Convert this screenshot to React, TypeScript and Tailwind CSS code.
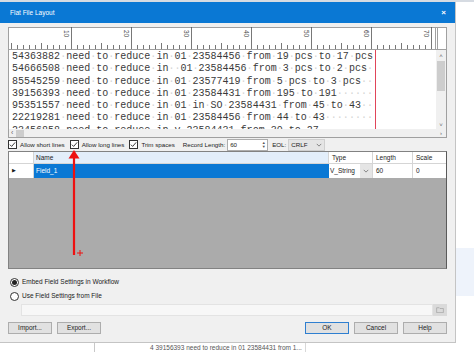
import React from 'react';

const lines = [
  '54363882 need to reduce in 01 23584456 from 19 pcs to 17 pcs',
  '54666508 need to reduce in  01 23584456 from 3 pcs to 2 pcs',
  '85545259 need to reduce in 01 23577419 from 5 pcs to 3 pcs',
  '39156393 need to reduce in 01 23584431 from 195 to 191',
  '95351557 need to reduce in 01 in SO 23584431 from 45 to 43',
  '22219281 need to reduce in 01 23584456 from 44 to 43',
  '23456858 need to reduce in v 23584431 from 30 to 27',
];

const MonoLine = ({ text }: { text: string }) => (
  <div className="h-[12.3px] whitespace-pre">
    {text
      .padEnd(60, ' ')
      .split('')
      .map((c, i) =>
        c === ' ' ? (
          <span key={i} className="text-[#d4d4d4]">·</span>
        ) : (
          <span key={i}>{c}</span>
        )
      )}
  </div>
);

const Ruler = () => {
  const ticks = Array.from({ length: 71 }, (_, i) => i);
  return (
    <svg width="439" height="23" className="block">
      <rect x="0.5" y="0.5" width="438" height="22" fill="#fff" stroke="#a0a0a0" />
      <line x1="427.5" y1="0" x2="427.5" y2="23" stroke="#a0a0a0" />
      <line x1="429.5" y1="0" x2="429.5" y2="23" stroke="#a0a0a0" />
      {ticks.map((i) => {
        const x = 3 + i * 6 + 0.5;
        if (x > 427) return null;
        const major = i % 10 === 0 && i > 0;
        const mid = i % 5 === 0;
        return (
          <line
            key={i}
            x1={x}
            x2={x}
            y1={major ? 0 : mid ? 16 : 18}
            y2={22}
            stroke="#555"
            strokeWidth="0.8"
          />
        );
      })}
      {[10, 20, 30, 40, 50, 60, 70].map((n, k) => (
        <text
          key={n}
          x="0"
          y="0"
          fontSize="6.5"
          fill="#444"
          fontFamily="Liberation Sans"
          transform={`translate(${3 + (k + 1) * 60 - 7} 3) rotate(90)`}
        >
          {n}
        </text>
      ))}
    </svg>
  );
};

const Check = () => (
  <span className="flex h-[9px] w-[9px] items-center justify-center border border-[#333] bg-white">
    <svg viewBox="0 0 8 8" className="h-[7px] w-[7px]">
      <path d="M1 4.2 L3 6.2 L7 1.6" stroke="#222" fill="none" strokeWidth="1" />
    </svg>
  </span>
);

const Radio = ({ on }: { on?: boolean }) => (
  <span className="flex h-[9px] w-[9px] items-center justify-center rounded-full border border-[#333] bg-white">
    {on && <span className="h-[5px] w-[5px] rounded-full bg-[#222]" />}
  </span>
);

const Chevron = () => (
  <svg viewBox="0 0 8 5" className="h-[4px] w-[6px]">
    <path d="M1 1 L4 4 L7 1" stroke="#555" fill="none" strokeWidth="0.9" />
  </svg>
);

const Btn = ({ label, primary }: { label: string; primary?: boolean }) => (
  <div
    className={`flex h-[12px] w-[44px] items-center justify-center bg-[#e1e1e1] text-[6.5px] text-[#222] ${
      primary ? 'border-[1.5px] border-[#2f7fd0]' : 'border border-[#adadad]'
    }`}
  >
    {label}
  </div>
);

export default function App() {
  return (
    <div className="relative h-[352px] w-[474px] overflow-hidden bg-white font-['Liberation_Sans',sans-serif] text-[#1a1a1a]">
      <div className="h-[2px] bg-[#d6dbe2]" />
      <div className="flex">
        <div className="flex h-[341px] w-[456px] flex-col border-r border-b border-[#c4c4c4] bg-[#f0f0f0]">
          {/* title bar */}
          <div className="flex h-[21px] items-center justify-between bg-[#0a78d4] pl-[10px] pr-[9px] text-white">
            <span className="text-[6.5px]">Flat File Layout</span>
            <span className="text-[8px] font-bold">×</span>
          </div>

          <div className="flex flex-col pl-[8px] pr-[8px] pt-[4px]">
            <Ruler />
            {/* text area */}
            <div className="flex h-[88px] border-x border-b border-[#a0a0a0] bg-white">
              <div className="flex w-[428px] flex-col">
                <div className="relative h-[79px] overflow-hidden pl-[3px] pt-[1px] font-['Liberation_Mono',monospace] text-[10px] leading-[12.3px] text-[#3a3a3a]">
                  {lines.map((l, i) => (
                    <MonoLine key={i} text={l} />
                  ))}
                  <div className="absolute left-[366px] top-0 h-full w-px bg-[#e0455a]" />
                </div>
                <div className="flex h-[8px] items-center bg-[#f0f0f0] pl-[2px] text-[7px] leading-[8px] text-[#666]">
                  <span>‹</span>
                  <span className="ml-[3px] h-[7px] w-[8px] bg-[#cdcdcd]" />
                </div>
              </div>
              <div className="flex w-[10px] flex-col items-center bg-[#f0f0f0] text-[6px] text-[#666]">
                <span className="mt-[2px] leading-[8px]">˄</span>
                <span className="mt-[1px] h-[30px] w-[8px] bg-[#cdcdcd]" />
                <span className="mt-auto leading-[8px]">˅</span>
                <span className="leading-[8px]">›</span>
              </div>
            </div>

            {/* options row */}
            <div className="flex h-[13px] items-center text-[6.2px] text-[#222]">
              <Check />
              <span className="ml-[3px]">Allow short lines</span>
              <span className="ml-[5px]" />
              <Check />
              <span className="ml-[3px]">Allow long lines</span>
              <span className="ml-[5px]" />
              <Check />
              <span className="ml-[3px]">Trim spaces</span>
              <span className="ml-[8px]">Record Length:</span>
              <div className="ml-[2px] flex h-[12px] w-[41px] items-center border border-[#adadad] bg-white">
                <span className="flex-1 pl-[2px]">60</span>
                <span className="flex w-[7px] flex-col items-center text-[4px] leading-[4px] text-[#555]">
                  <span>▲</span>
                  <span>▼</span>
                </span>
              </div>
              <span className="ml-[4px]">EOL:</span>
              <div className="ml-[2px] flex h-[12px] w-[37px] items-center justify-between border border-[#cfcfcf] bg-[#e5e5e5] px-[2px]">
                <span>CRLF</span>
                <Chevron />
              </div>
            </div>

            {/* grid */}
            <div className="flex h-[118px] flex-col border border-[#828282] border-r-[#5a5a5a] bg-[#ababab] text-[6.5px]">
              <div className="flex h-[12px] bg-white">
                <div className="w-[25px] border-r border-b border-[#d5d5d5]" />
                <div className="flex w-[295px] items-center border-r border-b border-[#d5d5d5] bg-[#e3eefa] pl-[2px]">Name</div>
                <div className="flex w-[44px] items-center border-r border-b border-[#d5d5d5] pl-[3px]">Type</div>
                <div className="flex w-[40px] items-center border-r border-b border-[#d5d5d5] pl-[3px]">Length</div>
                <div className="flex flex-1 items-center border-b border-[#d5d5d5] pl-[3px]">Scale</div>
              </div>
              <div className="flex h-[14px] bg-white">
                <div className="flex w-[25px] items-center border-r border-[#d5d5d5] pl-[3px] text-[5px]">▶</div>
                <div className="flex w-[295px] items-center bg-[#0a78d4] pl-[2px] text-white">Field_1</div>
                <div className="flex w-[44px] items-center border-r border-[#d5d5d5]">
                  <span className="flex-1 pl-[1px]">V_String</span>
                  <span className="flex h-full w-[12px] items-center justify-center bg-[#e5e5e5]">
                    <Chevron />
                  </span>
                </div>
                <div className="flex w-[40px] items-center border-r border-[#d5d5d5] pl-[3px]">60</div>
                <div className="flex flex-1 items-center pl-[3px]">0</div>
              </div>
            </div>

            {/* field settings */}
            <div className="mt-[6px] flex h-[14px] items-center pl-[2px] text-[6.5px]">
              <Radio on />
              <span className="ml-[3px]">Embed Field Settings in Workflow</span>
            </div>
            <div className="flex h-[14px] items-center pl-[2px] text-[6.5px]">
              <Radio />
              <span className="ml-[3px]">Use Field Settings from File</span>
            </div>
            <div className="mt-[1px] flex h-[12px] items-center pl-[13px]">
              <div className="h-full flex-1 border border-[#e3e3e3] bg-[#f7f7f7]" />
              <div className="flex h-full w-[14px] items-center justify-center bg-[#dadada]">
                <svg viewBox="0 0 10 8" className="h-[6px] w-[8px]">
                  <path d="M0.5 1 H4 L5 2 H9.5 V7.5 H0.5 Z" stroke="#999" fill="none" strokeWidth="0.8" />
                </svg>
              </div>
            </div>

            {/* buttons */}
            <div className="mt-[6px] flex items-center">
              <Btn label="Import..." />
              <span className="ml-[5px]" />
              <Btn label="Export..." />
              <span className="ml-auto" />
              <Btn label="OK" primary />
              <span className="ml-[5px]" />
              <Btn label="Cancel" />
              <span className="ml-[5px]" />
              <Btn label="Help" />
            </div>
          </div>
        </div>

        {/* right background strip */}
        <div className="flex flex-1 flex-col">
          <div className="h-[246px]" />
          <div className="h-[48px] bg-[#eef3fb]" />
        </div>
      </div>

      {/* background below the dialog */}
      <div className="flex h-[9px] items-center text-[6.5px] text-[#555]">
        <div className="h-full w-[95px] border-r border-[#c8c8c8]" />
        <span className="ml-[55px]">4  39156393 need to reduce in 01 23584431 from 1...</span>
        <div className="ml-[3px] h-full border-r border-[#d8d8d8]" />
      </div>

      {/* red annotation arrow */}
      <svg className="absolute left-[66px] top-[148px]" width="22" height="112">
        <path d="M8 2 L2.5 10.5 L13.5 10.5 Z" fill="#e11" />
        <line x1="8" y1="9" x2="8" y2="107" stroke="#e11" strokeWidth="2.2" />
        <path d="M14 102 V108 M11 105 H17" stroke="#e11" strokeWidth="1" />
      </svg>
    </div>
  );
}
